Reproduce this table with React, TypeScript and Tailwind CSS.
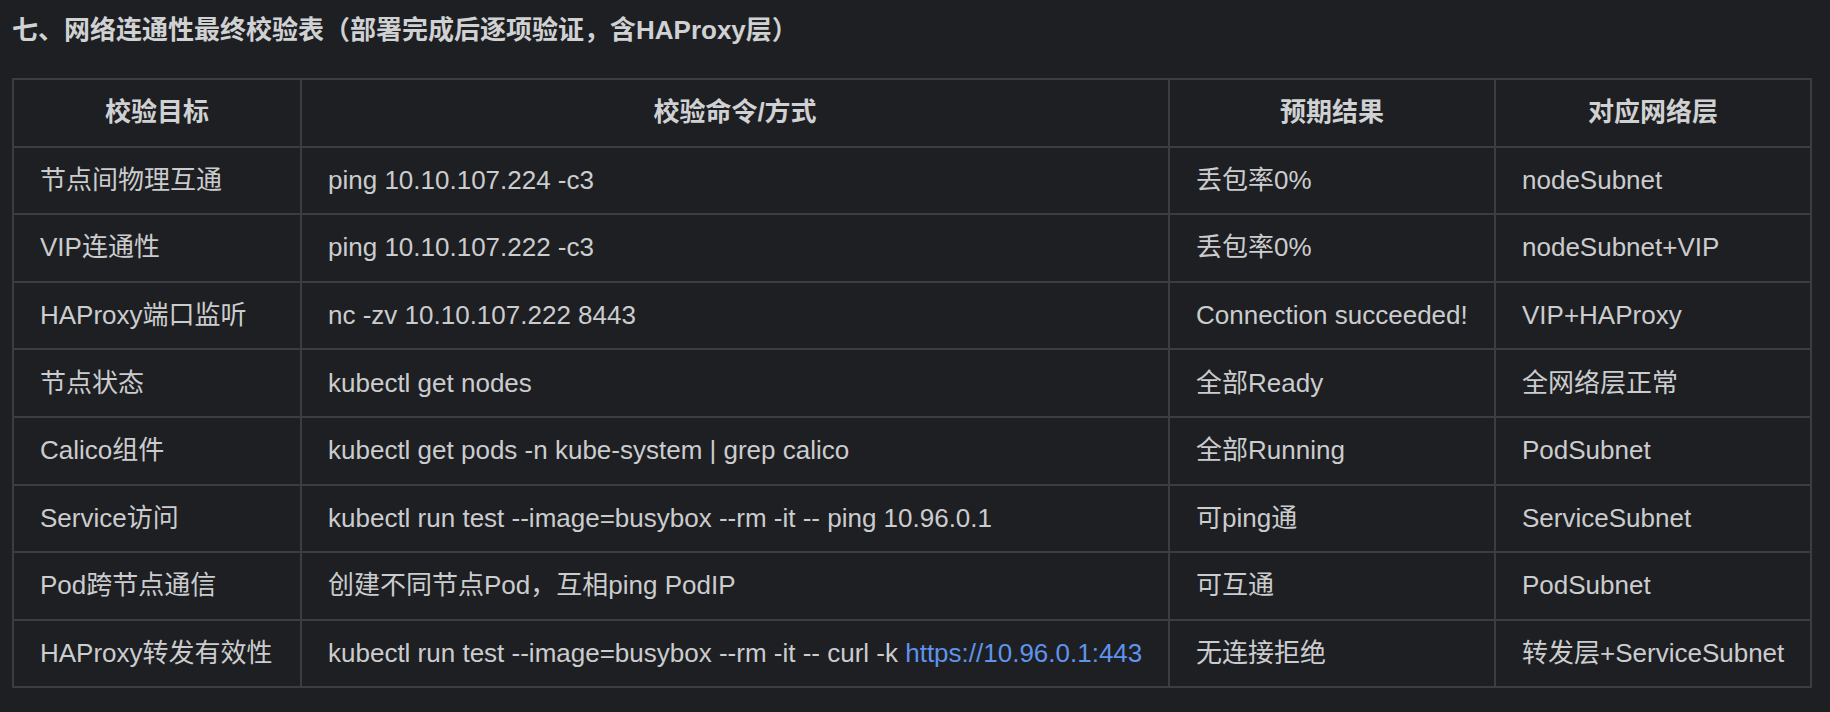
import React from "react";

// 网络连通性最终校验表 — dark doc-style table

interface Row {
  target: string;
  cmd: React.ReactNode;
  expect: string;
  layer: string;
}

const ROWS: Row[] = [
  { target: "节点间物理互通", cmd: "ping 10.10.107.224 -c3", expect: "丢包率0%", layer: "nodeSubnet" },
  { target: "VIP连通性", cmd: "ping 10.10.107.222 -c3", expect: "丢包率0%", layer: "nodeSubnet+VIP" },
  { target: "HAProxy端口监听", cmd: "nc -zv 10.10.107.222 8443", expect: "Connection succeeded!", layer: "VIP+HAProxy" },
  { target: "节点状态", cmd: "kubectl get nodes", expect: "全部Ready", layer: "全网络层正常" },
  {
    target: "Calico组件",
    cmd: "kubectl get pods -n kube-system | grep calico",
    expect: "全部Running",
    layer: "PodSubnet",
  },
  {
    target: "Service访问",
    cmd: "kubectl run test --image=busybox --rm -it -- ping 10.96.0.1",
    expect: "可ping通",
    layer: "ServiceSubnet",
  },
  { target: "Pod跨节点通信", cmd: "创建不同节点Pod，互相ping PodIP", expect: "可互通", layer: "PodSubnet" },
  {
    target: "HAProxy转发有效性",
    cmd: (
      <>
        kubectl run test --image=busybox --rm -it -- curl -k{" "}
        <a href="#" className="text-[#5f93ec]">
          https://10.96.0.1:443
        </a>
      </>
    ),
    expect: "无连接拒绝",
    layer: "转发层+ServiceSubnet",
  },
];

const HEAD = ["校验目标", "校验命令/方式", "预期结果", "对应网络层"];

export default function App() {
  return (
    <div
      className="h-screen overflow-hidden bg-[#1e1f22] pl-[12px] pt-[10px] text-[#cbccce]"
      style={{ fontFamily: '"Liberation Sans", "Noto Sans CJK SC", sans-serif' }}
    >
      <h3 className="text-[26px] font-bold leading-[40px] text-[#d0d1d3]">
        七、网络连通性最终校验表（部署完成后逐项验证，含HAProxy层）
      </h3>

      <table className="mt-[28px] w-[1798px] table-fixed border-collapse text-[26px]">
        <colgroup>
          <col className="w-[288px]" />
          <col className="w-[868px]" />
          <col className="w-[326px]" />
          <col className="w-[316px]" />
        </colgroup>
        <thead>
          <tr>
            {HEAD.map((h) => (
              <th
                key={h}
                className="h-[67.6px] border-2 border-[#3c3d41] px-[26px] text-center font-bold text-[#d0d1d3]"
              >
                {h}
              </th>
            ))}
          </tr>
        </thead>
        <tbody>
          {ROWS.map((r, i) => (
            <tr key={i}>
              <td className="h-[67.6px] border-2 border-[#3c3d41] px-[26px] whitespace-nowrap">{r.target}</td>
              <td className="border-2 border-[#3c3d41] px-[26px] whitespace-nowrap">{r.cmd}</td>
              <td className="border-2 border-[#3c3d41] px-[26px] whitespace-nowrap">{r.expect}</td>
              <td className="border-2 border-[#3c3d41] px-[26px] whitespace-nowrap">{r.layer}</td>
            </tr>
          ))}
        </tbody>
      </table>
    </div>
  );
}
